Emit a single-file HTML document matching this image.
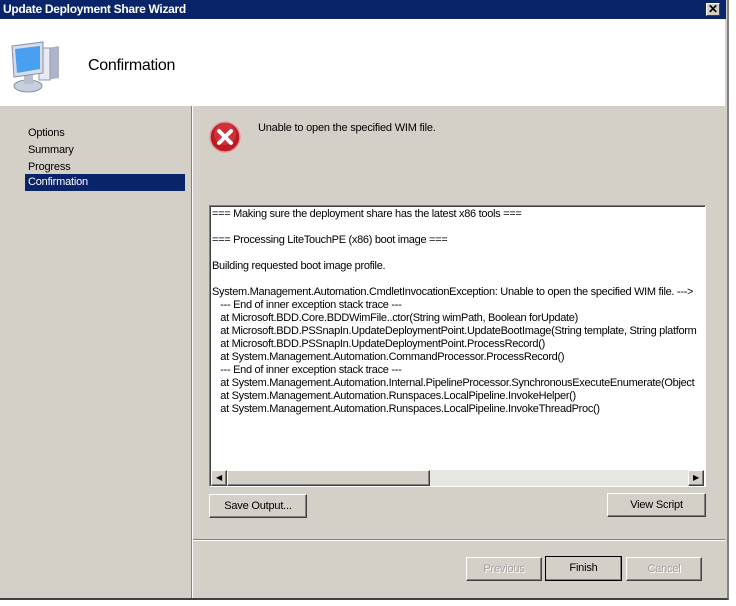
<!DOCTYPE html>
<html><head><style>
body{margin:0;width:736px;height:606px;background:#fff;position:relative;overflow:hidden;font-family:"Liberation Sans",sans-serif;font-size:11px;color:#000}
.a{position:absolute}
.btn{position:absolute;background:#d4d0c8;border:1px solid;border-color:#fff #404040 #404040 #fff;box-shadow:inset -1px -1px 0 #808080;text-align:center;font-size:11px;line-height:23px;box-sizing:border-box;letter-spacing:-0.2px}
.dis{color:#a0a0a0;text-shadow:1px 1px 0 #fff}
#log div{white-space:pre;height:13px;line-height:13px;letter-spacing:-0.3px}
</style></head><body>
<div class="a" style="left:0;top:0;width:727px;height:598px;background:#d4d0c8;border-right:2px solid #808080;border-bottom:2px solid #404040"></div>
<div class="a" style="left:0;top:0;width:726px;height:19px;background:#0a246a;color:#fff;font-weight:bold;font-size:12px;line-height:19px;padding-left:3px;box-sizing:border-box;letter-spacing:-0.3px">Update Deployment Share Wizard</div>
<div class="a" style="left:706px;top:3px;width:14px;height:13px;background:#d4d0c8;border:1px solid;border-color:#fff #404040 #404040 #fff;box-sizing:border-box;font-size:12px;line-height:11px;text-align:center;font-weight:bold">✕</div>
<div class="a" style="left:0;top:19px;width:725px;height:87px;background:#fff"></div>
<svg class="a" style="left:6px;top:38px" width="60" height="56" viewBox="0 0 60 56">
<ellipse cx="22" cy="48" rx="14" ry="6" fill="#c8d0e0" stroke="#8890a8"/>
<rect x="18" y="36" width="9" height="10" fill="#b8c0d0"/>
<path d="M41 10 l12-2 v32 l-12 2z" fill="#b0b4c8"/>
<rect x="33" y="10" width="11" height="32" fill="#e8eaf2" stroke="#9098b0"/>
<path d="M6 8 L37 4 V35 L8 39Z" fill="#d8dce8" stroke="#8890a8"/>
<path d="M9 11 L34 8 V31 L11 35Z" fill="#4aa0f0"/>
</svg>
<div class="a" style="left:88px;top:57px;font-size:16px;letter-spacing:-0.3px">Confirmation</div>
<div class="a" style="left:0;top:106px;width:191px;height:492px;background:#d4d0c8;border-right:1px solid #808080"></div>
<div class="a" style="left:192px;top:106px;width:1px;height:492px;background:#fff"></div>
<div class="a" style="left:28px;top:125px;line-height:17px;letter-spacing:-0.2px">Options<br>Summary<br>Progress</div>
<div class="a" style="left:25px;top:174px;width:160px;height:17px;background:#0a246a;color:#fff;line-height:17px;padding-left:3px;box-sizing:border-box;letter-spacing:-0.2px">Confirmation</div>
<svg class="a" style="left:209px;top:121px" width="32" height="32" viewBox="0 0 32 32">
<circle cx="16" cy="16" r="15" fill="#c01820" stroke="#d8a0a0" stroke-width="1.5"/>
<circle cx="16" cy="13" r="11" fill="#e04048" opacity=".6"/>
<path d="M10 10 L22 22 M22 10 L10 22" stroke="#fff" stroke-width="4" stroke-linecap="round"/>
</svg>
<div class="a" style="left:258px;top:122px;letter-spacing:-0.2px">Unable to open the specified WIM file.</div>
<div class="a" style="left:209px;top:205px;width:497px;height:282px;background:#fff;border:1px solid;border-color:#808080 #fff #fff #808080;box-shadow:inset 1px 1px 0 #404040;box-sizing:border-box"></div>
<div id="log" class="a" style="left:212px;top:208px;width:493px;overflow:hidden">
<div>=== Making sure the deployment share has the latest x86 tools ===</div><div> </div>
<div>=== Processing LiteTouchPE (x86) boot image ===</div><div> </div>
<div>Building requested boot image profile.</div><div> </div>
<div>System.Management.Automation.CmdletInvocationException: Unable to open the specified WIM file. ---&gt;</div>
<div>   --- End of inner exception stack trace ---</div>
<div>   at Microsoft.BDD.Core.BDDWimFile..ctor(String wimPath, Boolean forUpdate)</div>
<div>   at Microsoft.BDD.PSSnapIn.UpdateDeploymentPoint.UpdateBootImage(String template, String platform</div>
<div>   at Microsoft.BDD.PSSnapIn.UpdateDeploymentPoint.ProcessRecord()</div>
<div>   at System.Management.Automation.CommandProcessor.ProcessRecord()</div>
<div>   --- End of inner exception stack trace ---</div>
<div>   at System.Management.Automation.Internal.PipelineProcessor.SynchronousExecuteEnumerate(Object</div>
<div>   at System.Management.Automation.Runspaces.LocalPipeline.InvokeHelper()</div>
<div>   at System.Management.Automation.Runspaces.LocalPipeline.InvokeThreadProc()</div>
</div>
<div class="a" style="left:211px;top:470px;width:493px;height:16px;background:#e8e6e0"></div>
<div class="btn" style="left:211px;top:470px;width:16px;height:16px;line-height:14px;font-size:8px">◀</div>
<div class="btn" style="left:227px;top:470px;width:203px;height:16px"></div>
<div class="btn" style="left:688px;top:470px;width:16px;height:16px;line-height:14px;font-size:8px">▶</div>
<div class="btn" style="left:209px;top:494px;width:98px;height:24px">Save Output...</div>
<div class="btn" style="left:607px;top:493px;width:99px;height:24px">View Script</div>
<div class="a" style="left:193px;top:539px;width:532px;height:1px;background:#808080;border-bottom:1px solid #fff"></div>
<div class="btn dis" style="left:466px;top:557px;width:76px;height:24px">Previous</div>
<div class="btn" style="left:545px;top:556px;width:77px;height:25px;outline:1px solid #000;outline-offset:-1px">Finish</div>
<div class="btn dis" style="left:626px;top:557px;width:76px;height:24px">Cancel</div>
</body></html>
